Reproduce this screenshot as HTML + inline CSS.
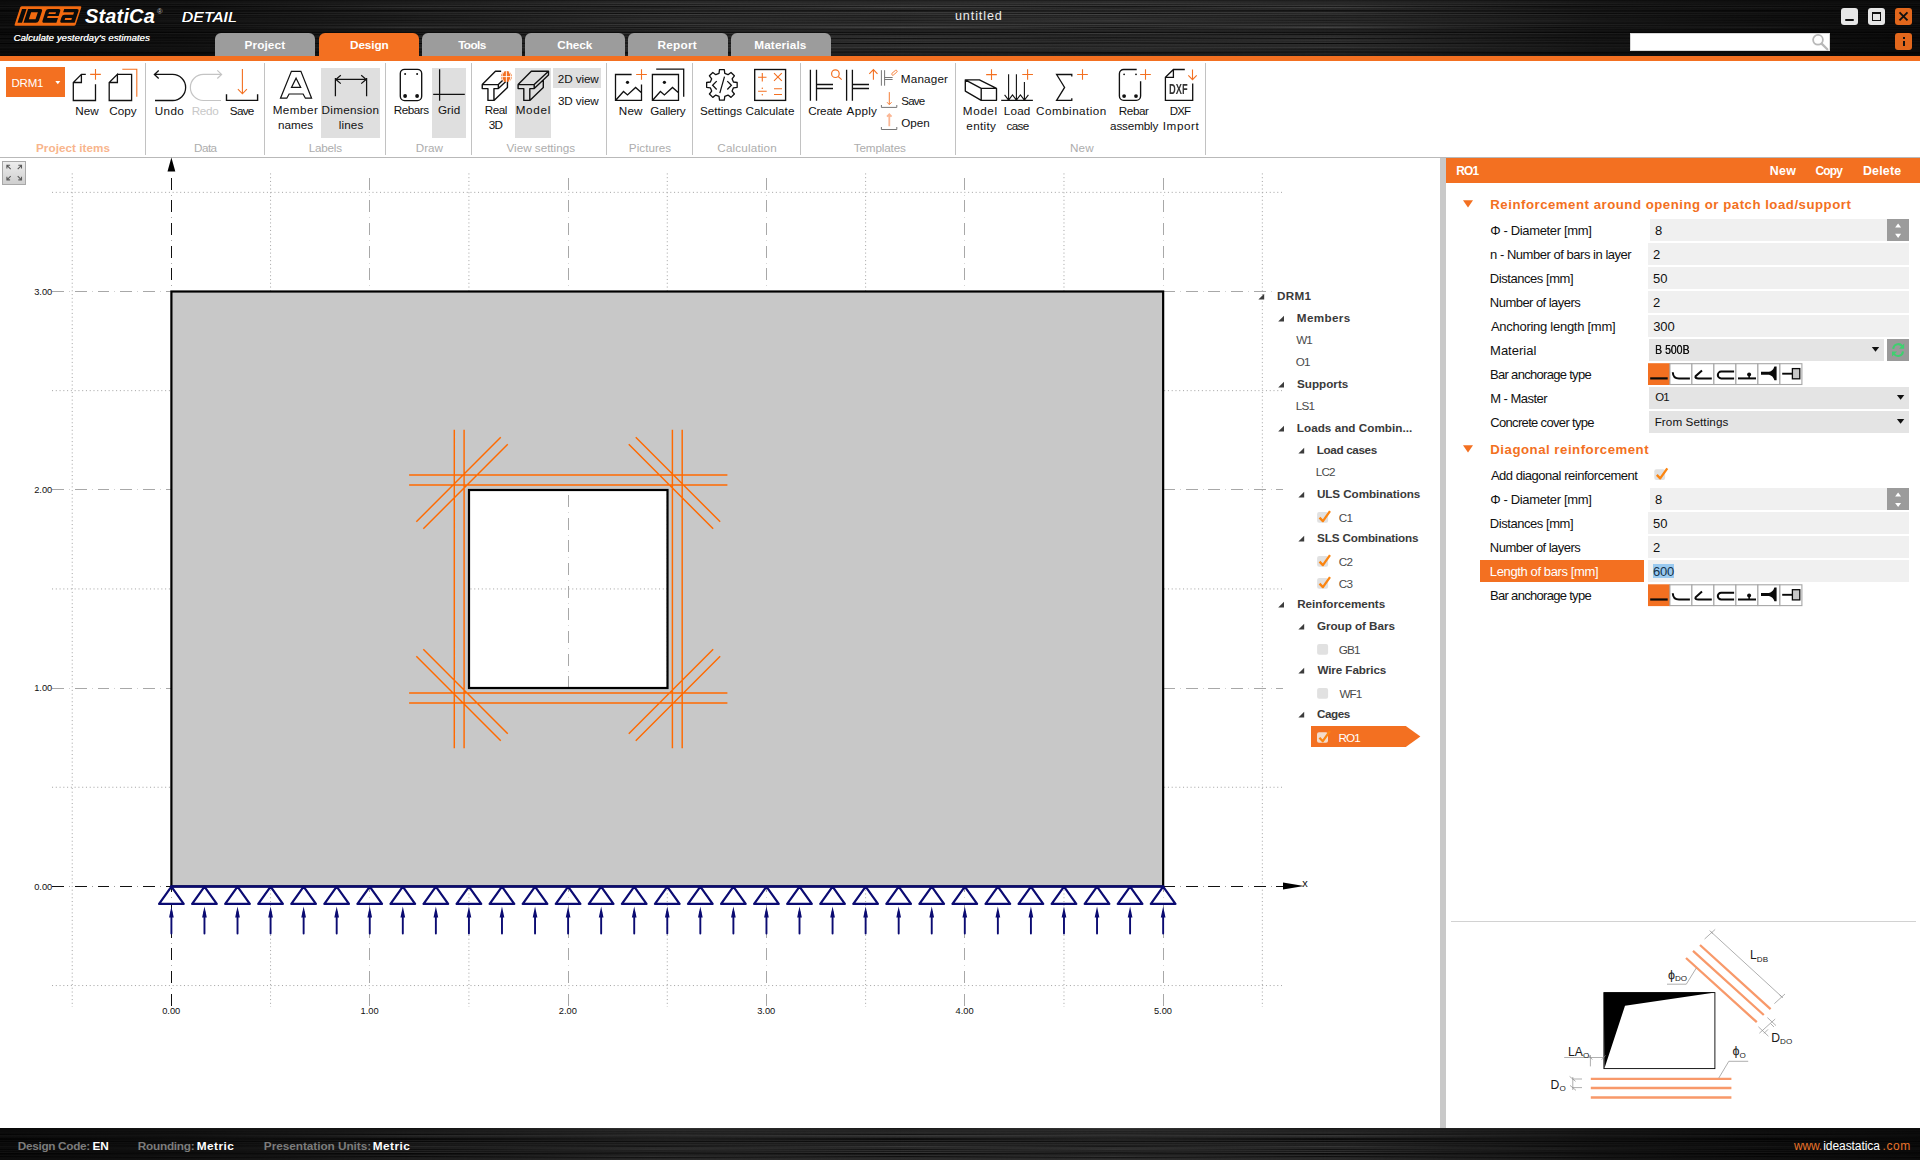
<!DOCTYPE html>
<html lang="en"><head><meta charset="utf-8"><title>IDEA StatiCa Detail - untitled</title><style>
html,body{margin:0;padding:0;}
body{width:1920px;height:1160px;overflow:hidden;background:#fff;position:relative;font-family:"Liberation Sans",sans-serif;}
.b{position:absolute;box-sizing:border-box;}
.t{position:absolute;white-space:pre;font-family:"Liberation Sans",sans-serif;}
svg{overflow:visible;}
</style></head>
<body>
<div class="b" style="left:0;top:0px;width:1920px;height:57px;background:linear-gradient(180deg,rgb(32,32,32) 0px,rgb(32,32,32) 1px,rgb(38,38,38) 1px,rgb(38,38,38) 2px,rgb(42,42,42) 2px,rgb(42,42,42) 3px,rgb(41,41,41) 3px,rgb(41,41,41) 4px,rgb(43,43,43) 4px,rgb(43,43,43) 5px,rgb(58,58,58) 5px,rgb(58,58,58) 6px,rgb(28,28,28) 6px,rgb(28,28,28) 7px,rgb(68,68,68) 7px,rgb(68,68,68) 8px,rgb(42,42,42) 8px,rgb(42,42,42) 9px,rgb(40,40,40) 9px,rgb(40,40,40) 10px,rgb(17,17,17) 10px,rgb(17,17,17) 11px,rgb(27,27,27) 11px,rgb(27,27,27) 12px,rgb(58,58,58) 12px,rgb(58,58,58) 13px,rgb(44,44,44) 13px,rgb(44,44,44) 14px,rgb(51,51,51) 14px,rgb(51,51,51) 15px,rgb(31,31,31) 15px,rgb(31,31,31) 16px,rgb(44,44,44) 16px,rgb(44,44,44) 17px,rgb(31,31,31) 17px,rgb(31,31,31) 18px,rgb(44,44,44) 18px,rgb(44,44,44) 19px,rgb(43,43,43) 19px,rgb(43,43,43) 20px,rgb(29,29,29) 20px,rgb(29,29,29) 21px,rgb(45,45,45) 21px,rgb(45,45,45) 22px,rgb(34,34,34) 22px,rgb(34,34,34) 23px,rgb(46,46,46) 23px,rgb(46,46,46) 24px,rgb(52,52,52) 24px,rgb(52,52,52) 25px,rgb(33,33,33) 25px,rgb(33,33,33) 26px,rgb(54,54,54) 26px,rgb(54,54,54) 27px,rgb(71,71,71) 27px,rgb(71,71,71) 28px,rgb(40,40,40) 28px,rgb(40,40,40) 29px,rgb(28,28,28) 29px,rgb(28,28,28) 30px,rgb(35,35,35) 30px,rgb(35,35,35) 31px,rgb(34,34,34) 31px,rgb(34,34,34) 32px,rgb(18,18,18) 32px,rgb(18,18,18) 33px,rgb(37,37,37) 33px,rgb(37,37,37) 34px,rgb(17,17,17) 34px,rgb(17,17,17) 35px,rgb(45,45,45) 35px,rgb(45,45,45) 36px,rgb(47,47,47) 36px,rgb(47,47,47) 37px,rgb(52,52,52) 37px,rgb(52,52,52) 38px,rgb(16,16,16) 38px,rgb(16,16,16) 39px,rgb(44,44,44) 39px,rgb(44,44,44) 40px,rgb(51,51,51) 40px,rgb(51,51,51) 41px,rgb(39,39,39) 41px,rgb(39,39,39) 42px,rgb(51,51,51) 42px,rgb(51,51,51) 43px,rgb(10,10,10) 43px,rgb(10,10,10) 44px,rgb(46,46,46) 44px,rgb(46,46,46) 45px,rgb(42,42,42) 45px,rgb(42,42,42) 46px,rgb(43,43,43) 46px,rgb(43,43,43) 47px,rgb(58,58,58) 47px,rgb(58,58,58) 48px,rgb(36,36,36) 48px,rgb(36,36,36) 49px,rgb(28,28,28) 49px,rgb(28,28,28) 50px,rgb(39,39,39) 50px,rgb(39,39,39) 51px,rgb(25,25,25) 51px,rgb(25,25,25) 52px,rgb(26,26,26) 52px,rgb(26,26,26) 53px,rgb(39,39,39) 53px,rgb(39,39,39) 54px,rgb(34,34,34) 54px,rgb(34,34,34) 55px,rgb(29,29,29) 55px,rgb(29,29,29) 56px,rgb(12,12,12) 56px,rgb(12,12,12) 57px);"></div>
<div class="b" style="left:0;top:0px;width:1920px;height:57px;background:linear-gradient(180deg,rgb(30,30,30) 0px,rgb(30,30,30) 1px,rgb(46,46,46) 1px,rgb(46,46,46) 2px,rgb(46,46,46) 2px,rgb(46,46,46) 3px,rgb(66,66,66) 3px,rgb(66,66,66) 4px,rgb(29,29,29) 4px,rgb(29,29,29) 5px,rgb(58,58,58) 5px,rgb(58,58,58) 6px,rgb(18,18,18) 6px,rgb(18,18,18) 7px,rgb(32,32,32) 7px,rgb(32,32,32) 8px,rgb(38,38,38) 8px,rgb(38,38,38) 9px,rgb(54,54,54) 9px,rgb(54,54,54) 10px,rgb(38,38,38) 10px,rgb(38,38,38) 11px,rgb(36,36,36) 11px,rgb(36,36,36) 12px,rgb(53,53,53) 12px,rgb(53,53,53) 13px,rgb(8,8,8) 13px,rgb(8,8,8) 14px,rgb(73,73,73) 14px,rgb(73,73,73) 15px,rgb(38,38,38) 15px,rgb(38,38,38) 16px,rgb(47,47,47) 16px,rgb(47,47,47) 17px,rgb(36,36,36) 17px,rgb(36,36,36) 18px,rgb(51,51,51) 18px,rgb(51,51,51) 19px,rgb(45,45,45) 19px,rgb(45,45,45) 20px,rgb(61,61,61) 20px,rgb(61,61,61) 21px,rgb(51,51,51) 21px,rgb(51,51,51) 22px,rgb(43,43,43) 22px,rgb(43,43,43) 23px,rgb(24,24,24) 23px,rgb(24,24,24) 24px,rgb(67,67,67) 24px,rgb(67,67,67) 25px,rgb(37,37,37) 25px,rgb(37,37,37) 26px,rgb(52,52,52) 26px,rgb(52,52,52) 27px,rgb(9,9,9) 27px,rgb(9,9,9) 28px,rgb(51,51,51) 28px,rgb(51,51,51) 29px,rgb(32,32,32) 29px,rgb(32,32,32) 30px,rgb(44,44,44) 30px,rgb(44,44,44) 31px,rgb(36,36,36) 31px,rgb(36,36,36) 32px,rgb(13,13,13) 32px,rgb(13,13,13) 33px,rgb(68,68,68) 33px,rgb(68,68,68) 34px,rgb(37,37,37) 34px,rgb(37,37,37) 35px,rgb(32,32,32) 35px,rgb(32,32,32) 36px,rgb(42,42,42) 36px,rgb(42,42,42) 37px,rgb(16,16,16) 37px,rgb(16,16,16) 38px,rgb(39,39,39) 38px,rgb(39,39,39) 39px,rgb(44,44,44) 39px,rgb(44,44,44) 40px,rgb(26,26,26) 40px,rgb(26,26,26) 41px,rgb(52,52,52) 41px,rgb(52,52,52) 42px,rgb(24,24,24) 42px,rgb(24,24,24) 43px,rgb(37,37,37) 43px,rgb(37,37,37) 44px,rgb(50,50,50) 44px,rgb(50,50,50) 45px,rgb(45,45,45) 45px,rgb(45,45,45) 46px,rgb(30,30,30) 46px,rgb(30,30,30) 47px,rgb(46,46,46) 47px,rgb(46,46,46) 48px,rgb(45,45,45) 48px,rgb(45,45,45) 49px,rgb(49,49,49) 49px,rgb(49,49,49) 50px,rgb(41,41,41) 50px,rgb(41,41,41) 51px,rgb(41,41,41) 51px,rgb(41,41,41) 52px,rgb(9,9,9) 52px,rgb(9,9,9) 53px,rgb(13,13,13) 53px,rgb(13,13,13) 54px,rgb(31,31,31) 54px,rgb(31,31,31) 55px,rgb(41,41,41) 55px,rgb(41,41,41) 56px,rgb(27,27,27) 56px,rgb(27,27,27) 57px);-webkit-mask-image:linear-gradient(90deg,transparent 0%,#000 9%,transparent 21%,#000 34%,transparent 47%,#000 58%,transparent 69%,#000 81%,transparent 92%,#000 100%);mask-image:linear-gradient(90deg,transparent 0%,#000 9%,transparent 21%,#000 34%,transparent 47%,#000 58%,transparent 69%,#000 81%,transparent 92%,#000 100%);opacity:.8;"></div>
<div class="b" style="left:0;top:0px;width:1920px;height:57px;background:linear-gradient(90deg,rgba(0,0,0,.7) 0%,rgba(0,0,0,.6) 10%,rgba(0,0,0,.3) 22%,rgba(0,0,0,.08) 36%,rgba(0,0,0,0) 50%,rgba(0,0,0,.06) 70%,rgba(0,0,0,.5) 83%,rgba(0,0,0,.74) 100%);"></div>
<div class="b" style="left:0px;top:56px;width:1920px;height:4.6px;background:#f37021;"></div>
<svg class="b" style="left:0px;top:0px;" width="240" height="56" viewBox="0 0 240 56"><g transform="translate(14.2,25.8) skewX(-18.1)">
<rect x="0" y="-19.6" width="61.1" height="19.6" rx="1.4" fill="#f26a10"/>
<g fill="#0b0b0b">
<rect x="2.3" y="-16.9" width="4.5" height="13.9"/>
<path fill-rule="evenodd" d="M8.3,-16.9H20.6Q23,-16.9 23,-14.5V-5.4Q23,-3 20.6,-3H8.3Z M12.5,-13.6V-6.5H19.2V-13.6Z"/>
<path fill-rule="evenodd" d="M29,-16.9H38.8Q41.2,-16.9 41.2,-14.5V-9.8H30.3V-7.8H41.2V-5.9H41.2V-3H29Q26.6,-3 26.6,-5.4V-14.5Q26.6,-16.9 29,-16.9Z M30.4,-13.6V-11.7H37.4V-13.6Z"/>
<path fill-rule="evenodd" d="M44.5,-16.9H57.1Q59.5,-16.9 59.5,-14.5V-3H46.9Q44.5,-3 44.5,-5.4V-8.6Q44.5,-11 46.9,-11H55.4V-13.6H44.5Z M48.5,-7.8V-5.9H55.2V-7.8Z"/>
</g></g></svg>
<span class="t" style="left:85.10px;top:4.17px;font-size:20.00px;line-height:24px;color:#fff;font-weight:700;font-style:italic;letter-spacing:0.133px;">StatiCa</span>
<span class="t" style="left:156.89px;top:5.60px;font-size:7.50px;line-height:12px;color:#bbb;">®</span>
<span class="t" style="left:181.73px;top:6.53px;font-size:15.50px;line-height:20px;color:#fff;font-style:italic;letter-spacing:0.357px;text-shadow:0.3px 0 0 #fff;">DETAIL</span>
<span class="t" style="left:13.48px;top:31.41px;font-size:9.50px;line-height:14px;color:#f4f4f4;font-style:italic;letter-spacing:0.098px;text-shadow:0.3px 0 0 #f4f4f4;">Calculate yesterday&#x27;s estimates</span>
<div class="b" style="left:215px;top:33px;width:99.6px;height:23.2px;background:#9c9c9c;border-radius:6px 6px 0 0;"></div>
<span class="t" style="left:244.53px;top:36.61px;font-size:11.80px;line-height:16px;color:#fff;font-weight:700;letter-spacing:0.097px;">Project</span>
<div class="b" style="left:319.2px;top:33px;width:99.6px;height:23.2px;background:#f37021;border-radius:6px 6px 0 0;"></div>
<span class="t" style="left:350.03px;top:36.61px;font-size:11.80px;line-height:16px;color:#fff;font-weight:700;letter-spacing:-0.136px;">Design</span>
<div class="b" style="left:422.3px;top:33px;width:99.6px;height:23.2px;background:#9c9c9c;border-radius:6px 6px 0 0;"></div>
<span class="t" style="left:458.18px;top:36.61px;font-size:11.80px;line-height:16px;color:#fff;font-weight:700;letter-spacing:-0.633px;">Tools</span>
<div class="b" style="left:525.3px;top:33px;width:99.6px;height:23.2px;background:#9c9c9c;border-radius:6px 6px 0 0;"></div>
<span class="t" style="left:557.23px;top:36.61px;font-size:11.80px;line-height:16px;color:#fff;font-weight:700;letter-spacing:-0.097px;">Check</span>
<div class="b" style="left:628.4px;top:33px;width:99.6px;height:23.2px;background:#9c9c9c;border-radius:6px 6px 0 0;"></div>
<span class="t" style="left:657.53px;top:36.61px;font-size:11.80px;line-height:16px;color:#fff;font-weight:700;letter-spacing:0.246px;">Report</span>
<div class="b" style="left:731.3px;top:33px;width:99.6px;height:23.2px;background:#9c9c9c;border-radius:6px 6px 0 0;"></div>
<span class="t" style="left:754.23px;top:36.61px;font-size:11.80px;line-height:16px;color:#fff;font-weight:700;letter-spacing:0.128px;">Materials</span>
<span class="t" style="left:954.94px;top:7.83px;font-size:12.60px;line-height:17px;color:#ececec;letter-spacing:0.897px;">untitled</span>
<div class="b" style="left:1841.1px;top:8.2px;width:16.8px;height:16.8px;background:#e6e6e6;border-radius:3px;"></div>
<div class="b" style="left:1845.2px;top:19.1px;width:8.7px;height:1.9px;background:#111;border-radius:1px;"></div>
<div class="b" style="left:1868.1px;top:8.2px;width:16.8px;height:16.8px;background:#e6e6e6;border-radius:3px;"></div>
<div class="b" style="left:1871.9px;top:12px;width:9.2px;height:9px;border:1.3px solid #111;border-top-width:2.3px;"></div>
<div class="b" style="left:1895px;top:8.2px;width:17px;height:16.8px;background:#e2671c;border-radius:3px;"></div>
<svg class="b" style="left:1895px;top:8.2px;" width="17" height="16.8" viewBox="0 0 17 16.8"><path d="M4.5,4.4L12.5,12.4M12.5,4.4L4.5,12.4" stroke="#111" stroke-width="1.9" fill="none"/></svg>
<div class="b" style="left:1630px;top:33px;width:200px;height:17.9px;background:#fff;box-shadow:inset 0 0 0 1px #d8d8d8;"></div>
<svg class="b" style="left:1808px;top:33px;" width="22" height="18" viewBox="0 0 22 18"><circle cx="10" cy="6.8" r="4.9" fill="none" stroke="#b8b8b8" stroke-width="1.8"/><path d="M13.6,10.6L19.3,16.2" stroke="#b8b8b8" stroke-width="2.3" stroke-linecap="round"/></svg>
<div class="b" style="left:1895px;top:33.1px;width:17px;height:16.9px;background:#e2671c;border-radius:3px;"></div>
<div class="b" style="left:1902.8px;top:37.2px;width:2.2px;height:1.9px;background:#111;"></div>
<div class="b" style="left:1902.8px;top:40.6px;width:2.2px;height:5.4px;background:#111;"></div>
<div class="b" style="left:0;top:1128px;width:1920px;height:32px;background:linear-gradient(180deg,rgb(24,24,24) 0px,rgb(24,24,24) 1px,rgb(33,33,33) 1px,rgb(33,33,33) 2px,rgb(36,36,36) 2px,rgb(36,36,36) 3px,rgb(37,37,37) 3px,rgb(37,37,37) 4px,rgb(42,42,42) 4px,rgb(42,42,42) 5px,rgb(37,37,37) 5px,rgb(37,37,37) 6px,rgb(17,17,17) 6px,rgb(17,17,17) 7px,rgb(58,58,58) 7px,rgb(58,58,58) 8px,rgb(47,47,47) 8px,rgb(47,47,47) 9px,rgb(37,37,37) 9px,rgb(37,37,37) 10px,rgb(14,14,14) 10px,rgb(14,14,14) 11px,rgb(10,10,10) 11px,rgb(10,10,10) 12px,rgb(37,37,37) 12px,rgb(37,37,37) 13px,rgb(13,13,13) 13px,rgb(13,13,13) 14px,rgb(46,46,46) 14px,rgb(46,46,46) 15px,rgb(31,31,31) 15px,rgb(31,31,31) 16px,rgb(35,35,35) 16px,rgb(35,35,35) 17px,rgb(32,32,32) 17px,rgb(32,32,32) 18px,rgb(58,58,58) 18px,rgb(58,58,58) 19px,rgb(40,40,40) 19px,rgb(40,40,40) 20px,rgb(41,41,41) 20px,rgb(41,41,41) 21px,rgb(17,17,17) 21px,rgb(17,17,17) 22px,rgb(48,48,48) 22px,rgb(48,48,48) 23px,rgb(24,24,24) 23px,rgb(24,24,24) 24px,rgb(55,55,55) 24px,rgb(55,55,55) 25px,rgb(10,10,10) 25px,rgb(10,10,10) 26px,rgb(24,24,24) 26px,rgb(24,24,24) 27px,rgb(45,45,45) 27px,rgb(45,45,45) 28px,rgb(15,15,15) 28px,rgb(15,15,15) 29px,rgb(40,40,40) 29px,rgb(40,40,40) 30px,rgb(44,44,44) 30px,rgb(44,44,44) 31px,rgb(41,41,41) 31px,rgb(41,41,41) 32px);"></div>
<div class="b" style="left:0;top:1128px;width:1920px;height:32px;background:linear-gradient(180deg,rgb(68,68,68) 0px,rgb(68,68,68) 1px,rgb(44,44,44) 1px,rgb(44,44,44) 2px,rgb(50,50,50) 2px,rgb(50,50,50) 3px,rgb(34,34,34) 3px,rgb(34,34,34) 4px,rgb(42,42,42) 4px,rgb(42,42,42) 5px,rgb(34,34,34) 5px,rgb(34,34,34) 6px,rgb(53,53,53) 6px,rgb(53,53,53) 7px,rgb(47,47,47) 7px,rgb(47,47,47) 8px,rgb(38,38,38) 8px,rgb(38,38,38) 9px,rgb(35,35,35) 9px,rgb(35,35,35) 10px,rgb(38,38,38) 10px,rgb(38,38,38) 11px,rgb(44,44,44) 11px,rgb(44,44,44) 12px,rgb(35,35,35) 12px,rgb(35,35,35) 13px,rgb(19,19,19) 13px,rgb(19,19,19) 14px,rgb(39,39,39) 14px,rgb(39,39,39) 15px,rgb(29,29,29) 15px,rgb(29,29,29) 16px,rgb(46,46,46) 16px,rgb(46,46,46) 17px,rgb(30,30,30) 17px,rgb(30,30,30) 18px,rgb(13,13,13) 18px,rgb(13,13,13) 19px,rgb(49,49,49) 19px,rgb(49,49,49) 20px,rgb(51,51,51) 20px,rgb(51,51,51) 21px,rgb(61,61,61) 21px,rgb(61,61,61) 22px,rgb(32,32,32) 22px,rgb(32,32,32) 23px,rgb(44,44,44) 23px,rgb(44,44,44) 24px,rgb(16,16,16) 24px,rgb(16,16,16) 25px,rgb(32,32,32) 25px,rgb(32,32,32) 26px,rgb(39,39,39) 26px,rgb(39,39,39) 27px,rgb(37,37,37) 27px,rgb(37,37,37) 28px,rgb(60,60,60) 28px,rgb(60,60,60) 29px,rgb(15,15,15) 29px,rgb(15,15,15) 30px,rgb(39,39,39) 30px,rgb(39,39,39) 31px,rgb(51,51,51) 31px,rgb(51,51,51) 32px);-webkit-mask-image:linear-gradient(90deg,transparent 0%,#000 9%,transparent 21%,#000 34%,transparent 47%,#000 58%,transparent 69%,#000 81%,transparent 92%,#000 100%);mask-image:linear-gradient(90deg,transparent 0%,#000 9%,transparent 21%,#000 34%,transparent 47%,#000 58%,transparent 69%,#000 81%,transparent 92%,#000 100%);opacity:.8;"></div>
<div class="b" style="left:0;top:1128px;width:1920px;height:32px;background:linear-gradient(90deg,rgba(0,0,0,.7) 0%,rgba(0,0,0,.6) 10%,rgba(0,0,0,.3) 22%,rgba(0,0,0,.08) 36%,rgba(0,0,0,0) 50%,rgba(0,0,0,.06) 70%,rgba(0,0,0,.5) 83%,rgba(0,0,0,.74) 100%);"></div>
<span class="t" style="left:17.83px;top:1137.91px;font-size:11.80px;line-height:16px;color:#7c7c7c;font-weight:700;letter-spacing:-0.333px;">Design Code:</span>
<span class="t" style="left:92.43px;top:1137.91px;font-size:11.80px;line-height:16px;color:#fff;font-weight:700;letter-spacing:-0.009px;">EN</span>
<span class="t" style="left:137.83px;top:1137.91px;font-size:11.80px;line-height:16px;color:#7c7c7c;font-weight:700;letter-spacing:-0.264px;">Rounding:</span>
<span class="t" style="left:196.73px;top:1137.91px;font-size:11.80px;line-height:16px;color:#fff;font-weight:700;letter-spacing:0.462px;">Metric</span>
<span class="t" style="left:263.83px;top:1137.91px;font-size:11.80px;line-height:16px;color:#7c7c7c;font-weight:700;letter-spacing:-0.045px;">Presentation Units:</span>
<span class="t" style="left:372.73px;top:1137.91px;font-size:11.80px;line-height:16px;color:#fff;font-weight:700;letter-spacing:0.462px;">Metric</span>
<span class="t" style="left:1794.06px;top:1137.84px;font-size:12.00px;line-height:16px;color:#e8732a;letter-spacing:-0.220px;">www.</span>
<span class="t" style="left:1823.22px;top:1137.84px;font-size:12.00px;line-height:16px;color:#fff;letter-spacing:-0.064px;">ideastatica</span>
<span class="t" style="left:1882.52px;top:1137.84px;font-size:12.00px;line-height:16px;color:#e8732a;letter-spacing:0.607px;">.com</span>
<div class="b" style="left:0px;top:156.5px;width:1920px;height:1.3px;background:#b9b9b9;"></div>
<div class="b" style="left:321px;top:68px;width:59px;height:69.6px;background:#dfdfdf;"></div>
<div class="b" style="left:432.2px;top:68px;width:33.6px;height:69.6px;background:#dfdfdf;"></div>
<div class="b" style="left:515.2px;top:68px;width:35.6px;height:69.6px;background:#dfdfdf;"></div>
<div class="b" style="left:553px;top:68px;width:48px;height:19.8px;background:#dfdfdf;"></div>
<div class="b" style="left:145.0px;top:63px;width:1.2px;height:91.5px;background:#c2c2c2;"></div>
<div class="b" style="left:263.9px;top:63px;width:1.2px;height:91.5px;background:#c2c2c2;"></div>
<div class="b" style="left:385.0px;top:63px;width:1.2px;height:91.5px;background:#c2c2c2;"></div>
<div class="b" style="left:470.9px;top:63px;width:1.2px;height:91.5px;background:#c2c2c2;"></div>
<div class="b" style="left:605.8px;top:63px;width:1.2px;height:91.5px;background:#c2c2c2;"></div>
<div class="b" style="left:691.9px;top:63px;width:1.2px;height:91.5px;background:#c2c2c2;"></div>
<div class="b" style="left:800.1px;top:63px;width:1.2px;height:91.5px;background:#c2c2c2;"></div>
<div class="b" style="left:955.0px;top:63px;width:1.2px;height:91.5px;background:#c2c2c2;"></div>
<div class="b" style="left:1204.9px;top:63px;width:1.2px;height:91.5px;background:#c2c2c2;"></div>
<div class="b" style="left:6px;top:67px;width:59px;height:30px;background:#f37021;"></div>
<span class="t" style="left:11.48px;top:74.72px;font-size:11.50px;line-height:16px;color:#fff;letter-spacing:-0.203px;">DRM1</span>
<svg class="b" style="left:0;top:60px" width="1920" height="100" viewBox="0 60 1920 100"><path d="M55.3,81.1H60.3L57.8,84.3Z" fill="#fff"/><path d="M85.8,74.4H81.4L73.3,82.5V100.5H95.5V84.3M81.4,74.4V82.5H73.3" fill="none" stroke="#111" stroke-width="1.3" /><path d="M90.15,74.4H100.85M95.5,69.05000000000001V79.75" fill="none" stroke="#f37021" stroke-width="1.1" /><path d="M117.4,74.4H131.6V100.5H109.2V82.5L117.4,74.4V82.5H109.2" fill="none" stroke="#111" stroke-width="1.3" /><path d="M122.3,69.2H136.8V96.8" fill="none" stroke="#f37021" stroke-width="1.1" /><path d="M158.7,70.4L154.4,74.4L158.7,78.5M154.6,74.4H172.6A13.05,13.05 0 0 1 172.6,100.5H155" fill="none" stroke="#111" stroke-width="1.3" /><path d="M217.3,70.4L221.6,74.4L217.3,78.5M221.4,74.4H203.4A13.05,13.05 0 0 0 203.4,100.5H221" fill="none" stroke="#c4c4c4" stroke-width="1.2" /><path d="M242.4,69V93.6M237.9,89.2L242.4,93.8L246.9,89.2" fill="none" stroke="#f37021" stroke-width="1.1" /><path d="M226.5,94.2V100.4H257.6V94.2" fill="none" stroke="#111" stroke-width="1.4" /><path d="M291.4,71.3H300.9L311.6,98.2H305.4L303.1,94H289.1L286.8,98.2H280.5ZM296.1,78.2L300.7,87.4H291.5Z" fill="none" stroke="#111" stroke-width="1.2" stroke-linejoin="miter"/><path d="M335.4,78.1V96.3M366.6,78.1V96.3M335.8,79.4H366.2M340.8,75.2L335.9,79.4L340.8,83.6M361.2,75.2L366.1,79.4L361.2,83.6" fill="none" stroke="#111" stroke-width="1.25" /><rect x="400.3" y="69.3" width="21.4" height="31.3" rx="4.3" fill="none" stroke="#111" stroke-width="1.35"/><circle cx="405.1" cy="74.1" r="1" fill="#111"/><circle cx="417.1" cy="74.1" r="1" fill="#111"/><circle cx="405.1" cy="96" r="1.9" fill="#111"/><circle cx="417.1" cy="96" r="1.9" fill="#111"/><path d="M439.6,69.2V100.7M433.2,94.4H464.8" fill="none" stroke="#111" stroke-width="1.25" /><path d="M482.25,84.6H498.35V88.6H493.94999999999993V100.4H487.94999999999993V88.6H482.25ZM482.25,84.6L495.44999999999993,71.3H501.15M498.35,84.6L504.65,78.6M498.35,88.6L510.65,77M507.44999999999993,80.2V87.6L493.94999999999993,100.4" fill="none" stroke="#111" stroke-width="1.4" stroke-linejoin="round"/><circle cx="506.4" cy="76.6" r="5.5" fill="#f37021"/><path d="M500.9,76.6H511.9M506.4,71.1V82.1M503.6,72A8,8 0 0 0 503.6,81.2M509.2,72A8,8 0 0 1 509.2,81.2" fill="none" stroke="#fff" stroke-width="0.9" /><path d="M518.1,84.6H534.2V88.6H529.8V100.4H523.8V88.6H518.1ZM518.1,84.6L531.3,71.3H548.5L534.2,84.6M548.5,71.3V75.1L534.2,88.6M543.3,80.2V87.6L529.8,100.4" fill="none" stroke="#111" stroke-width="1.4" stroke-linejoin="round"/><path d="M631.6,74.5H615.5V100.4H641.5V84.6M615.7,100.2L623.5,91.5L627.5,95L635.6,87.5L641.5,92.8" fill="none" stroke="#111" stroke-width="1.3" /><circle cx="627.5" cy="82.3" r="1.6" fill="#111"/><path d="M636.15,74.5H646.85M641.5,69.15V79.85" fill="none" stroke="#f37021" stroke-width="1.1" /><path d="M652.4,74.5H678.5V100.4H652.4ZM652.6,100.2L660.4,91.5L664.4,95L672.5,87.5L678.5,92.8M656.2,69.2H683.7V96.7" fill="none" stroke="#111" stroke-width="1.3" /><circle cx="664.4" cy="82.3" r="1.6" fill="#111"/><path d="M719.01,73.36L719.51,69.64L724.29,69.64L724.79,73.36L728.02,74.70L731.01,72.42L734.38,75.79L732.10,78.78L733.44,82.01L737.16,82.51L737.16,87.29L733.44,87.79L732.10,91.02L734.38,94.01L731.01,97.38L728.02,95.10L724.79,96.44L724.29,100.16L719.51,100.16L719.01,96.44L715.78,95.10L712.79,97.38L709.42,94.01L711.70,91.02L710.36,87.79L706.64,87.29L706.64,82.51L710.36,82.01L711.70,78.78L709.42,75.79L712.79,72.42L715.78,74.70Z" fill="none" stroke="#111" stroke-width="1.3" stroke-linejoin="round"/><path d="M716.7,81.1L712.6,85.3L716.7,89.5M727.3,81.1L731.4,85.3L727.3,89.5M724.5,76.6L719.8,93.2" fill="none" stroke="#111" stroke-width="1.25" /><rect x="754.7" y="69.5" width="30.9" height="30.9" fill="none" stroke="#111" stroke-width="1.35"/><path d="M758.1,77.3H766.5M762.3,73.1V81.5M774,73.1L781.8,80.9M781.8,73.1L774,80.9M758.1,91.3H766.7M774,88.7H782M774,94.5H782" fill="none" stroke="#f37021" stroke-width="1.1" /><circle cx="762.3" cy="88.3" r="0.75" fill="#f37021"/><circle cx="762.3" cy="94.8" r="0.75" fill="#f37021"/><path d="M810.4,69.7V100.7M816.5,69.7V100.7M816.5,84.5H833M816.5,88.5H833" fill="none" stroke="#111" stroke-width="1.3" /><circle cx="835.4" cy="73.7" r="3.8" fill="none" stroke="#f37021" stroke-width="1.2"/><path d="M838.2,76.5L841.7,79.7" fill="none" stroke="#f37021" stroke-width="1.1" /><path d="M846.6,69.7V100.7M852.4,69.7V100.7M852.4,84.5H869M852.4,88.5H869" fill="none" stroke="#111" stroke-width="1.3" /><path d="M873.4,69.4V79.8M869.3,73.9L873.4,69.6L877.5,73.9" fill="none" stroke="#f37021" stroke-width="1.1" /><path d="M881.4,70.2V85.7M884.6,70.2V85.7M884.6,77.5H892.6M884.6,79.5H892.6" fill="none" stroke="#666" stroke-width="0.9" /><rect x="-3.2" y="-1.1" width="6.4" height="2.2" rx="1" transform="translate(894.4,72.7) rotate(-40)" fill="none" stroke="#f37021" stroke-width="0.8"/><path d="M889.3,92.1V104.3M887,102.2L889.3,104.6L891.6,102.2" fill="none" stroke="#f37021" stroke-width="0.9" /><path d="M881.4,105V107.4H896.8V105" fill="none" stroke="#666" stroke-width="0.9" /><path d="M889.3,114.6V126.3M887,116.6L889.3,114.3L891.6,116.6" fill="none" stroke="#fbb795" stroke-width="1.8" /><path d="M881.4,127V129.5H896.8V127" fill="none" stroke="#666" stroke-width="0.9" /><path d="M981.2,88.4H996.5V100.3H981.2ZM981.2,88.4L965.3,79.9H979.4L996.5,88.4M965.3,79.9V91.1L981.2,100.3" fill="none" stroke="#111" stroke-width="1.35" stroke-linejoin="round"/><path d="M986.15,74.6H996.85M991.5,69.25V79.94999999999999" fill="none" stroke="#f37021" stroke-width="1.1" /><path d="M1001.2,100.4H1032.9M1008.6,74.3V100.2M1016.4,74.3V100.2M1024.4,82.1V100.2M1004.6,94.9L1008.6,100.2L1012.5,94.9L1016.4,100.2L1020.4,94.9L1024.4,100.2L1028.4,94.9" fill="none" stroke="#111" stroke-width="1.1" /><path d="M1022.2499999999999,74.5H1032.9499999999998M1027.6,69.15V79.85" fill="none" stroke="#f37021" stroke-width="1.1" /><path d="M1071.8,76.6V74.5H1056.6L1064.6,87.4L1056.6,100.3H1071.8V98.2" fill="none" stroke="#111" stroke-width="1.3" /><path d="M1077.15,74.5H1087.85M1082.5,69.15V79.85" fill="none" stroke="#f37021" stroke-width="1.1" /><path d="M1136.7,69.5H1123.7A4.3,4.3 0 0 0 1119.4,73.8V96.1A4.3,4.3 0 0 0 1123.7,100.4H1136.3A4.3,4.3 0 0 0 1140.6,96.1V81.2" fill="none" stroke="#111" stroke-width="1.35" /><circle cx="1124.1" cy="74.3" r="0.9" fill="#111"/><circle cx="1136" cy="74.3" r="0.9" fill="#111"/><circle cx="1124.1" cy="96.1" r="1.9" fill="#111"/><circle cx="1136" cy="96.1" r="1.9" fill="#111"/><path d="M1140.15,74.5H1150.85M1145.5,69.15V79.85" fill="none" stroke="#f37021" stroke-width="1.1" /><path d="M1184.8,69.5H1173.4L1165.4,77.3V100.4H1192.7V83.5M1173.4,69.5V77.3H1165.4" fill="none" stroke="#111" stroke-width="1.3" /><path d="M1192.5,69.5V79.5M1188.3,75.4L1192.5,79.7L1196.7,75.4" fill="none" stroke="#f37021" stroke-width="1.1" /></svg>
<span class="t" style="left:1168.6px;top:81.6px;font-size:14.2px;line-height:14px;font-weight:700;color:#333;transform:scaleX(0.655);transform-origin:0 0;">DXF</span>
<span class="t" style="left:75.26px;top:102.55px;font-size:11.70px;line-height:16px;color:#111;letter-spacing:0.039px;">New</span>
<span class="t" style="left:109.22px;top:102.55px;font-size:11.70px;line-height:16px;color:#111;letter-spacing:0.022px;">Copy</span>
<span class="t" style="left:154.72px;top:102.55px;font-size:11.70px;line-height:16px;color:#111;letter-spacing:0.394px;">Undo</span>
<span class="t" style="left:229.87px;top:102.55px;font-size:11.70px;line-height:16px;color:#111;letter-spacing:-0.727px;">Save</span>
<span class="t" style="left:272.66px;top:101.75px;font-size:11.70px;line-height:16px;color:#111;letter-spacing:0.475px;">Member</span>
<span class="t" style="left:277.94px;top:116.65px;font-size:11.70px;line-height:16px;color:#111;letter-spacing:-0.008px;">names</span>
<span class="t" style="left:321.56px;top:101.75px;font-size:11.70px;line-height:16px;color:#111;letter-spacing:0.294px;">Dimension</span>
<span class="t" style="left:338.64px;top:116.65px;font-size:11.70px;line-height:16px;color:#111;letter-spacing:0.182px;">lines</span>
<span class="t" style="left:393.86px;top:101.75px;font-size:11.70px;line-height:16px;color:#111;letter-spacing:-0.497px;">Rebars</span>
<span class="t" style="left:437.92px;top:101.75px;font-size:11.70px;line-height:16px;color:#111;letter-spacing:0.091px;">Grid</span>
<span class="t" style="left:484.66px;top:101.75px;font-size:11.70px;line-height:16px;color:#111;letter-spacing:-0.435px;">Real</span>
<span class="t" style="left:488.79px;top:116.65px;font-size:11.70px;line-height:16px;color:#111;letter-spacing:-0.681px;">3D</span>
<span class="t" style="left:515.66px;top:101.75px;font-size:11.70px;line-height:16px;color:#111;letter-spacing:0.704px;">Model</span>
<span class="t" style="left:557.71px;top:70.55px;font-size:11.70px;line-height:16px;color:#111;letter-spacing:-0.078px;">2D view</span>
<span class="t" style="left:557.89px;top:92.75px;font-size:11.70px;line-height:16px;color:#111;letter-spacing:-0.107px;">3D view</span>
<span class="t" style="left:618.76px;top:102.55px;font-size:11.70px;line-height:16px;color:#111;letter-spacing:0.189px;">New</span>
<span class="t" style="left:650.31px;top:102.55px;font-size:11.70px;line-height:16px;color:#111;letter-spacing:-0.267px;">Gallery</span>
<span class="t" style="left:699.97px;top:102.55px;font-size:11.70px;line-height:16px;color:#111;letter-spacing:-0.023px;">Settings</span>
<span class="t" style="left:745.41px;top:102.55px;font-size:11.70px;line-height:16px;color:#111;letter-spacing:0.033px;">Calculate</span>
<span class="t" style="left:808.21px;top:102.55px;font-size:11.70px;line-height:16px;color:#111;letter-spacing:-0.209px;">Create</span>
<span class="t" style="left:846.60px;top:102.55px;font-size:11.70px;line-height:16px;color:#111;letter-spacing:0.263px;">Apply</span>
<span class="t" style="left:900.86px;top:70.55px;font-size:11.70px;line-height:16px;color:#111;letter-spacing:0.166px;">Manager</span>
<span class="t" style="left:901.28px;top:92.69px;font-size:11.57px;line-height:16px;color:#111;letter-spacing:-0.800px;">Save</span>
<span class="t" style="left:901.27px;top:114.75px;font-size:11.70px;line-height:16px;color:#111;letter-spacing:-0.026px;">Open</span>
<span class="t" style="left:962.86px;top:102.55px;font-size:11.70px;line-height:16px;color:#111;letter-spacing:0.579px;">Model</span>
<span class="t" style="left:966.33px;top:117.55px;font-size:11.70px;line-height:16px;color:#111;letter-spacing:0.341px;">entity</span>
<span class="t" style="left:1003.86px;top:102.55px;font-size:11.70px;line-height:16px;color:#111;letter-spacing:0.135px;">Load</span>
<span class="t" style="left:1006.43px;top:117.55px;font-size:11.70px;line-height:16px;color:#111;letter-spacing:-0.584px;">case</span>
<span class="t" style="left:1036.12px;top:102.55px;font-size:11.70px;line-height:16px;color:#111;letter-spacing:0.449px;">Combination</span>
<span class="t" style="left:1118.76px;top:102.55px;font-size:11.70px;line-height:16px;color:#111;letter-spacing:-0.393px;">Rebar</span>
<span class="t" style="left:1110.03px;top:117.55px;font-size:11.70px;line-height:16px;color:#111;letter-spacing:-0.138px;">assembly</span>
<span class="t" style="left:1169.67px;top:102.59px;font-size:11.56px;line-height:16px;color:#111;letter-spacing:-0.800px;">DXF</span>
<span class="t" style="left:1162.75px;top:117.55px;font-size:11.70px;line-height:16px;color:#111;letter-spacing:0.588px;">Import</span>
<span class="t" style="left:191.66px;top:102.55px;font-size:11.70px;line-height:16px;color:#c8c8c8;letter-spacing:-0.320px;">Redo</span>
<span class="t" style="left:36.04px;top:139.75px;font-size:11.70px;line-height:16px;color:#f8b58c;font-weight:700;letter-spacing:0.041px;">Project items</span>
<span class="t" style="left:194.06px;top:139.75px;font-size:11.70px;line-height:16px;color:#adadad;letter-spacing:-0.537px;">Data</span>
<span class="t" style="left:308.76px;top:139.75px;font-size:11.70px;line-height:16px;color:#adadad;letter-spacing:-0.222px;">Labels</span>
<span class="t" style="left:415.76px;top:139.75px;font-size:11.70px;line-height:16px;color:#adadad;letter-spacing:-0.028px;">Draw</span>
<span class="t" style="left:506.50px;top:139.75px;font-size:11.70px;line-height:16px;color:#adadad;letter-spacing:-0.011px;">View settings</span>
<span class="t" style="left:628.86px;top:139.75px;font-size:11.70px;line-height:16px;color:#adadad;letter-spacing:0.015px;">Pictures</span>
<span class="t" style="left:717.31px;top:139.75px;font-size:11.70px;line-height:16px;color:#adadad;letter-spacing:0.163px;">Calculation</span>
<span class="t" style="left:853.77px;top:139.75px;font-size:11.70px;line-height:16px;color:#adadad;letter-spacing:-0.151px;">Templates</span>
<span class="t" style="left:1069.96px;top:139.75px;font-size:11.70px;line-height:16px;color:#adadad;letter-spacing:0.189px;">New</span>
<svg class="b" style="left:0;top:157px" width="1440" height="971" viewBox="0 157 1440 971"><g id="grid"><path d="M72.23,173.4V1007" stroke="#a6a6a6" stroke-width="1" stroke-dasharray="1.05 2.72" fill="none"/><path d="M270.57,173.4V1007" stroke="#a6a6a6" stroke-width="1" stroke-dasharray="1.05 2.72" fill="none"/><path d="M468.92,173.4V1007" stroke="#a6a6a6" stroke-width="1" stroke-dasharray="1.05 2.72" fill="none"/><path d="M667.27,173.4V1007" stroke="#a6a6a6" stroke-width="1" stroke-dasharray="1.05 2.72" fill="none"/><path d="M865.62,173.4V1007" stroke="#a6a6a6" stroke-width="1" stroke-dasharray="1.05 2.72" fill="none"/><path d="M1063.97,173.4V1007" stroke="#a6a6a6" stroke-width="1" stroke-dasharray="1.05 2.72" fill="none"/><path d="M1262.33,173.4V1007" stroke="#a6a6a6" stroke-width="1" stroke-dasharray="1.05 2.72" fill="none"/><path d="M52,985.55H1282" stroke="#a6a6a6" stroke-width="1" stroke-dasharray="1.05 2.72" fill="none"/><path d="M52,787.25H1282" stroke="#a6a6a6" stroke-width="1" stroke-dasharray="1.05 2.72" fill="none"/><path d="M52,588.95H1282" stroke="#a6a6a6" stroke-width="1" stroke-dasharray="1.05 2.72" fill="none"/><path d="M52,390.65H1282" stroke="#a6a6a6" stroke-width="1" stroke-dasharray="1.05 2.72" fill="none"/><path d="M52,192.35H1282" stroke="#a6a6a6" stroke-width="1" stroke-dasharray="1.05 2.72" fill="none"/><path d="M369.75,177.7V1005.6" fill="none" stroke="#a8a8a8" stroke-width="1" stroke-dasharray="11.8 10.87" shape-rendering="crispEdges"/><path d="M369.75,177.7V1005.6" fill="none" stroke="#d6d6d6" stroke-width="1" stroke-dasharray="0 16.8 1 4.87" shape-rendering="crispEdges"/><path d="M568.10,177.7V1005.6" fill="none" stroke="#a8a8a8" stroke-width="1" stroke-dasharray="11.8 10.87" shape-rendering="crispEdges"/><path d="M568.10,177.7V1005.6" fill="none" stroke="#d6d6d6" stroke-width="1" stroke-dasharray="0 16.8 1 4.87" shape-rendering="crispEdges"/><path d="M766.45,177.7V1005.6" fill="none" stroke="#a8a8a8" stroke-width="1" stroke-dasharray="11.8 10.87" shape-rendering="crispEdges"/><path d="M766.45,177.7V1005.6" fill="none" stroke="#d6d6d6" stroke-width="1" stroke-dasharray="0 16.8 1 4.87" shape-rendering="crispEdges"/><path d="M964.80,177.7V1005.6" fill="none" stroke="#a8a8a8" stroke-width="1" stroke-dasharray="11.8 10.87" shape-rendering="crispEdges"/><path d="M964.80,177.7V1005.6" fill="none" stroke="#d6d6d6" stroke-width="1" stroke-dasharray="0 16.8 1 4.87" shape-rendering="crispEdges"/><path d="M1163.15,177.7V1005.6" fill="none" stroke="#a8a8a8" stroke-width="1" stroke-dasharray="11.8 10.87" shape-rendering="crispEdges"/><path d="M1163.15,177.7V1005.6" fill="none" stroke="#d6d6d6" stroke-width="1" stroke-dasharray="0 16.8 1 4.87" shape-rendering="crispEdges"/><path d="M52.3,688.10H1282.6" fill="none" stroke="#a8a8a8" stroke-width="1" stroke-dasharray="11.8 10.87" shape-rendering="crispEdges"/><path d="M52.3,688.10H1282.6" fill="none" stroke="#d0d0d0" stroke-width="1" stroke-dasharray="0 16.8 1 4.87" shape-rendering="crispEdges"/><path d="M52.3,489.80H1282.6" fill="none" stroke="#a8a8a8" stroke-width="1" stroke-dasharray="11.8 10.87" shape-rendering="crispEdges"/><path d="M52.3,489.80H1282.6" fill="none" stroke="#d0d0d0" stroke-width="1" stroke-dasharray="0 16.8 1 4.87" shape-rendering="crispEdges"/><path d="M52.3,291.50H1274" fill="none" stroke="#a8a8a8" stroke-width="1" stroke-dasharray="11.8 10.87" shape-rendering="crispEdges"/><path d="M52.3,291.50H1274" fill="none" stroke="#d0d0d0" stroke-width="1" stroke-dasharray="0 16.8 1 4.87" shape-rendering="crispEdges"/><path d="M171.40,177.7V1005.6" fill="none" stroke="#111" stroke-width="1.1" stroke-dasharray="11.8 10.87" shape-rendering="crispEdges"/><path d="M171.40,177.7V1005.6" fill="none" stroke="#aaa" stroke-width="1.1" stroke-dasharray="0 16.8 1 4.87" shape-rendering="crispEdges"/><path d="M52.3,886.40H1284" fill="none" stroke="#111" stroke-width="1.1" stroke-dasharray="11.8 10.87" shape-rendering="crispEdges"/><path d="M52.3,886.40H1284" fill="none" stroke="#999" stroke-width="1.1" stroke-dasharray="0 16.8 1 4.87" shape-rendering="crispEdges"/></g><path d="M171.40,157.4L167.50,171.4H175.30Z" fill="#000"/><path d="M1304,886.00L1283,882.40V889.60Z" fill="#000"/><rect x="171.40" y="291.50" width="991.75" height="594.90" fill="#c8c8c8" stroke="#000" stroke-width="2.2"/><clipPath id="opc"><rect x="469.0" y="490.0" width="198.5" height="198.0"/></clipPath><rect x="469.0" y="490.0" width="198.5" height="198.0" fill="#fff"/><g clip-path="url(#opc)"><use href="#grid"/></g><rect x="469.0" y="490.0" width="198.5" height="198.0" fill="none" stroke="#000" stroke-width="2.2"/><path d="M464.10,429.8V748.2M454.30,429.8V748.2M672.40,429.8V748.2M682.20,429.8V748.2M409.1,485.00H727.4M409.1,475.00H727.4M409.1,693.00H727.4M409.1,703.00H727.4M507.75,444.32L423.32,528.75M500.75,437.32L416.32,521.75M628.75,444.32L713.18,528.75M635.75,437.32L720.18,521.75M507.75,733.68L423.32,649.25M500.75,740.68L416.32,656.25M628.75,733.68L713.18,649.25M635.75,740.68L720.18,656.25" fill="none" stroke="#ff6a00" stroke-width="1.45"/><path d="M170.30,886.50H1164.25" stroke="#0b0b72" stroke-width="2.4" fill="none"/><path d="M171.40,886.70L159.10,903.9H183.70ZM204.46,886.70L192.16,903.9H216.76ZM237.52,886.70L225.22,903.9H249.82ZM270.58,886.70L258.28,903.9H282.88ZM303.63,886.70L291.33,903.9H315.93ZM336.69,886.70L324.39,903.9H348.99ZM369.75,886.70L357.45,903.9H382.05ZM402.81,886.70L390.51,903.9H415.11ZM435.87,886.70L423.57,903.9H448.17ZM468.93,886.70L456.63,903.9H481.23ZM501.98,886.70L489.68,903.9H514.28ZM535.04,886.70L522.74,903.9H547.34ZM568.10,886.70L555.80,903.9H580.40ZM601.16,886.70L588.86,903.9H613.46ZM634.22,886.70L621.92,903.9H646.52ZM667.28,886.70L654.98,903.9H679.58ZM700.33,886.70L688.03,903.9H712.63ZM733.39,886.70L721.09,903.9H745.69ZM766.45,886.70L754.15,903.9H778.75ZM799.51,886.70L787.21,903.9H811.81ZM832.57,886.70L820.27,903.9H844.87ZM865.63,886.70L853.33,903.9H877.93ZM898.68,886.70L886.38,903.9H910.98ZM931.74,886.70L919.44,903.9H944.04ZM964.80,886.70L952.50,903.9H977.10ZM997.86,886.70L985.56,903.9H1010.16ZM1030.92,886.70L1018.62,903.9H1043.22ZM1063.98,886.70L1051.68,903.9H1076.28ZM1097.03,886.70L1084.73,903.9H1109.33ZM1130.09,886.70L1117.79,903.9H1142.39ZM1163.15,886.70L1150.85,903.9H1175.45Z" fill="none" stroke="#0b0b72" stroke-width="2.2" stroke-linejoin="round"/><path d="M171.40,933.6V912M204.46,933.6V912M237.52,933.6V912M270.58,933.6V912M303.63,933.6V912M336.69,933.6V912M369.75,933.6V912M402.81,933.6V912M435.87,933.6V912M468.93,933.6V912M501.98,933.6V912M535.04,933.6V912M568.10,933.6V912M601.16,933.6V912M634.22,933.6V912M667.28,933.6V912M700.33,933.6V912M733.39,933.6V912M766.45,933.6V912M799.51,933.6V912M832.57,933.6V912M865.63,933.6V912M898.68,933.6V912M931.74,933.6V912M964.80,933.6V912M997.86,933.6V912M1030.92,933.6V912M1063.98,933.6V912M1097.03,933.6V912M1130.09,933.6V912M1163.15,933.6V912" fill="none" stroke="#0b0b72" stroke-width="1.9" stroke-linecap="round"/><path d="M171.40,906.4L169.05,917.4H173.75ZM204.46,906.4L202.11,917.4H206.81ZM237.52,906.4L235.17,917.4H239.87ZM270.58,906.4L268.23,917.4H272.93ZM303.63,906.4L301.28,917.4H305.98ZM336.69,906.4L334.34,917.4H339.04ZM369.75,906.4L367.40,917.4H372.10ZM402.81,906.4L400.46,917.4H405.16ZM435.87,906.4L433.52,917.4H438.22ZM468.93,906.4L466.58,917.4H471.28ZM501.98,906.4L499.63,917.4H504.33ZM535.04,906.4L532.69,917.4H537.39ZM568.10,906.4L565.75,917.4H570.45ZM601.16,906.4L598.81,917.4H603.51ZM634.22,906.4L631.87,917.4H636.57ZM667.28,906.4L664.93,917.4H669.63ZM700.33,906.4L697.98,917.4H702.68ZM733.39,906.4L731.04,917.4H735.74ZM766.45,906.4L764.10,917.4H768.80ZM799.51,906.4L797.16,917.4H801.86ZM832.57,906.4L830.22,917.4H834.92ZM865.63,906.4L863.28,917.4H867.98ZM898.68,906.4L896.33,917.4H901.03ZM931.74,906.4L929.39,917.4H934.09ZM964.80,906.4L962.45,917.4H967.15ZM997.86,906.4L995.51,917.4H1000.21ZM1030.92,906.4L1028.57,917.4H1033.27ZM1063.98,906.4L1061.63,917.4H1066.33ZM1097.03,906.4L1094.68,917.4H1099.38ZM1130.09,906.4L1127.74,917.4H1132.44ZM1163.15,906.4L1160.80,917.4H1165.50Z" fill="#0b0b72"/><text x="52.3" y="889.70" text-anchor="end" font-family="Liberation Sans, sans-serif" font-size="9.3" fill="#111">0.00</text><text x="52.3" y="691.40" text-anchor="end" font-family="Liberation Sans, sans-serif" font-size="9.3" fill="#111">1.00</text><text x="52.3" y="493.10" text-anchor="end" font-family="Liberation Sans, sans-serif" font-size="9.3" fill="#111">2.00</text><text x="52.3" y="294.80" text-anchor="end" font-family="Liberation Sans, sans-serif" font-size="9.3" fill="#111">3.00</text><text x="171.20" y="1013.8" text-anchor="middle" font-family="Liberation Sans, sans-serif" font-size="9.3" fill="#111">0.00</text><text x="369.55" y="1013.8" text-anchor="middle" font-family="Liberation Sans, sans-serif" font-size="9.3" fill="#111">1.00</text><text x="567.90" y="1013.8" text-anchor="middle" font-family="Liberation Sans, sans-serif" font-size="9.3" fill="#111">2.00</text><text x="766.25" y="1013.8" text-anchor="middle" font-family="Liberation Sans, sans-serif" font-size="9.3" fill="#111">3.00</text><text x="964.60" y="1013.8" text-anchor="middle" font-family="Liberation Sans, sans-serif" font-size="9.3" fill="#111">4.00</text><text x="1162.95" y="1013.8" text-anchor="middle" font-family="Liberation Sans, sans-serif" font-size="9.3" fill="#111">5.00</text><text x="1302.2" y="886.9" font-family="Liberation Sans, sans-serif" font-size="11" fill="#111">x</text></svg>
<div class="b" style="left:2px;top:161px;width:24px;height:23.5px;border:1px solid #a8a8a8;background:linear-gradient(180deg,#ededed,#cfcfcf);"></div>
<svg class="b" style="left:0;top:157px" width="40" height="40" viewBox="0 157 40 40"><path d="M10.700000000000001,169.1L6.9,165.29999999999998M10.100000000000001,165.29999999999998H6.9V168.49999999999997M17.700000000000003,169.1L21.5,165.29999999999998M18.3,165.29999999999998H21.5V168.49999999999997M10.700000000000001,176.1L6.9,179.9M10.100000000000001,179.9H6.9V176.70000000000002M17.700000000000003,176.1L21.5,179.9M18.3,179.9H21.5V176.70000000000002" fill="none" stroke="#5a5a5a" stroke-width="1.1"/></svg>
<div class="b" style="left:1440px;top:157.5px;width:6px;height:970.5px;background:#c9c9c9;"></div>
<svg class="b" style="left:1240px;top:280px" width="200" height="480" viewBox="1240 280 200 480"><path d="M1264.2,293.8V299.6H1258.4Z" fill="#3c3c3c"/><path d="M1284.0,315.8V321.6H1278.2Z" fill="#3c3c3c"/><path d="M1284.0,381.8V387.6H1278.2Z" fill="#3c3c3c"/><path d="M1284.0,425.8V431.6H1278.2Z" fill="#3c3c3c"/><path d="M1304.2,447.8V453.6H1298.4Z" fill="#3c3c3c"/><path d="M1304.2,491.8V497.6H1298.4Z" fill="#3c3c3c"/><rect x="1317.1" y="512.1" width="11" height="10.6" rx="2" fill="#e1e1e1"/><path d="M1319.5,517.6L1322.8999999999999,521.1L1330.0,511.1" fill="none" stroke="#fb8511" stroke-width="2.3" stroke-linejoin="round"/><path d="M1304.2,535.8V541.6H1298.4Z" fill="#3c3c3c"/><rect x="1317.1" y="556.1" width="11" height="10.6" rx="2" fill="#e1e1e1"/><path d="M1319.5,561.6L1322.8999999999999,565.1L1330.0,555.1" fill="none" stroke="#fb8511" stroke-width="2.3" stroke-linejoin="round"/><rect x="1317.1" y="578.1" width="11" height="10.6" rx="2" fill="#e1e1e1"/><path d="M1319.5,583.6L1322.8999999999999,587.1L1330.0,577.1" fill="none" stroke="#fb8511" stroke-width="2.3" stroke-linejoin="round"/><path d="M1284.0,601.8V607.6H1278.2Z" fill="#3c3c3c"/><path d="M1304.2,623.8V629.6H1298.4Z" fill="#3c3c3c"/><rect x="1317.1" y="644.1" width="11" height="10.6" rx="2" fill="#e1e1e1"/><path d="M1304.2,667.8V673.6H1298.4Z" fill="#3c3c3c"/><rect x="1317.1" y="688.1" width="11" height="10.6" rx="2" fill="#e1e1e1"/><path d="M1304.2,711.8V717.6H1298.4Z" fill="#3c3c3c"/><path d="M1311,726H1405.8L1420.4,736.5L1405.8,747H1311Z" fill="#f37021"/><rect x="1317" y="732.2" width="11" height="10.6" rx="2" fill="#f3dccb"/><path d="M1319.4,737.7L1322.8,741.2L1329.9,731.2" fill="none" stroke="#fb8511" stroke-width="2.3" stroke-linejoin="round"/></svg>
<span class="t" style="left:1277.04px;top:287.55px;font-size:11.70px;line-height:16px;color:#3a3a3a;font-weight:700;letter-spacing:0.247px;">DRM1</span>
<span class="t" style="left:1296.84px;top:309.55px;font-size:11.70px;line-height:16px;color:#3a3a3a;font-weight:700;letter-spacing:0.335px;">Members</span>
<span class="t" style="left:1296.20px;top:331.55px;font-size:11.70px;line-height:16px;color:#4a4a4a;letter-spacing:-0.850px;">W1</span>
<span class="t" style="left:1295.87px;top:353.55px;font-size:11.70px;line-height:16px;color:#4a4a4a;letter-spacing:-0.850px;">O1</span>
<span class="t" style="left:1296.91px;top:375.55px;font-size:11.70px;line-height:16px;color:#3a3a3a;font-weight:700;letter-spacing:0.020px;">Supports</span>
<span class="t" style="left:1295.86px;top:397.55px;font-size:11.70px;line-height:16px;color:#4a4a4a;letter-spacing:-0.850px;">LS1</span>
<span class="t" style="left:1296.84px;top:419.55px;font-size:11.70px;line-height:16px;color:#3a3a3a;font-weight:700;letter-spacing:0.028px;">Loads and Combin...</span>
<span class="t" style="left:1316.84px;top:441.55px;font-size:11.70px;line-height:16px;color:#3a3a3a;font-weight:700;letter-spacing:-0.371px;">Load cases</span>
<span class="t" style="left:1315.86px;top:463.55px;font-size:11.70px;line-height:16px;color:#4a4a4a;letter-spacing:-0.850px;">LC2</span>
<span class="t" style="left:1316.90px;top:485.55px;font-size:11.70px;line-height:16px;color:#3a3a3a;font-weight:700;letter-spacing:-0.076px;">ULS Combinations</span>
<span class="t" style="left:1338.82px;top:509.55px;font-size:11.70px;line-height:16px;color:#4a4a4a;letter-spacing:-0.850px;">C1</span>
<span class="t" style="left:1317.11px;top:529.55px;font-size:11.70px;line-height:16px;color:#3a3a3a;font-weight:700;letter-spacing:-0.167px;">SLS Combinations</span>
<span class="t" style="left:1338.82px;top:553.55px;font-size:11.70px;line-height:16px;color:#4a4a4a;letter-spacing:-0.850px;">C2</span>
<span class="t" style="left:1338.82px;top:575.55px;font-size:11.70px;line-height:16px;color:#4a4a4a;letter-spacing:-0.850px;">C3</span>
<span class="t" style="left:1297.14px;top:595.55px;font-size:11.70px;line-height:16px;color:#3a3a3a;font-weight:700;letter-spacing:-0.017px;">Reinforcements</span>
<span class="t" style="left:1316.93px;top:617.55px;font-size:11.70px;line-height:16px;color:#3a3a3a;font-weight:700;letter-spacing:-0.046px;">Group of Bars</span>
<span class="t" style="left:1338.82px;top:641.55px;font-size:11.70px;line-height:16px;color:#4a4a4a;letter-spacing:-0.850px;">GB1</span>
<span class="t" style="left:1317.40px;top:661.55px;font-size:11.70px;line-height:16px;color:#3a3a3a;font-weight:700;letter-spacing:-0.098px;">Wire Fabrics</span>
<span class="t" style="left:1339.40px;top:685.55px;font-size:11.70px;line-height:16px;color:#4a4a4a;letter-spacing:-0.850px;">WF1</span>
<span class="t" style="left:1316.93px;top:705.55px;font-size:11.70px;line-height:16px;color:#3a3a3a;font-weight:700;letter-spacing:-0.456px;">Cages</span>
<span class="t" style="left:1338.46px;top:729.95px;font-size:11.70px;line-height:16px;color:#fff;letter-spacing:-0.850px;">RO1</span>
<div class="b" style="left:1446px;top:157.8px;width:474px;height:24.8px;background:#f37021;"></div>
<span class="t" style="left:1456.23px;top:162.77px;font-size:11.91px;line-height:16px;color:#fff;font-weight:700;letter-spacing:-0.800px;">RO1</span>
<span class="t" style="left:1769.69px;top:162.60px;font-size:12.40px;line-height:16px;color:#fff;font-weight:700;letter-spacing:0.331px;">New</span>
<span class="t" style="left:1815.52px;top:162.76px;font-size:11.95px;line-height:16px;color:#fff;font-weight:700;letter-spacing:-0.800px;">Copy</span>
<span class="t" style="left:1862.89px;top:162.60px;font-size:12.40px;line-height:16px;color:#fff;font-weight:700;letter-spacing:0.236px;">Delete</span>
<span class="t" style="left:1490.34px;top:195.73px;font-size:13.20px;line-height:17px;color:#f37021;font-weight:700;letter-spacing:0.523px;">Reinforcement around opening or patch load/support</span>
<span class="t" style="left:1490.34px;top:441.43px;font-size:13.20px;line-height:17px;color:#f37021;font-weight:700;letter-spacing:0.521px;">Diagonal reinforcement</span>
<div class="b" style="left:1650px;top:219.2px;width:237px;height:21.6px;background:#f0f0f0;"></div>
<div class="b" style="left:1887px;top:219.2px;width:21.8px;height:21.6px;background:#9b9b9b;"></div>
<span class="t" style="left:1654.88px;top:221.50px;font-size:13.00px;line-height:17px;color:#111;">8</span>
<span class="t" style="left:1490.19px;top:221.50px;font-size:13.00px;line-height:17px;color:#111;letter-spacing:-0.348px;">Φ - Diameter [mm]</span>
<div class="b" style="left:1648px;top:243.2px;width:260.8px;height:21.6px;background:#f0f0f0;"></div>
<span class="t" style="left:1652.95px;top:245.50px;font-size:13.00px;line-height:17px;color:#111;">2</span>
<span class="t" style="left:1490.06px;top:245.50px;font-size:13.00px;line-height:17px;color:#111;letter-spacing:-0.472px;">n - Number of bars in layer</span>
<div class="b" style="left:1648px;top:267.2px;width:260.8px;height:21.6px;background:#f0f0f0;"></div>
<span class="t" style="left:1653.08px;top:269.50px;font-size:13.00px;line-height:17px;color:#111;">50</span>
<span class="t" style="left:1489.86px;top:269.50px;font-size:13.00px;line-height:17px;color:#111;letter-spacing:-0.448px;">Distances [mm]</span>
<div class="b" style="left:1648px;top:291.2px;width:260.8px;height:21.6px;background:#f0f0f0;"></div>
<span class="t" style="left:1652.95px;top:293.50px;font-size:13.00px;line-height:17px;color:#111;">2</span>
<span class="t" style="left:1489.86px;top:293.50px;font-size:13.00px;line-height:17px;color:#111;letter-spacing:-0.540px;">Number of layers</span>
<div class="b" style="left:1648px;top:315.2px;width:260.8px;height:21.6px;background:#f0f0f0;"></div>
<span class="t" style="left:1653.14px;top:317.50px;font-size:13.00px;line-height:17px;color:#111;">300</span>
<span class="t" style="left:1490.90px;top:317.50px;font-size:13.00px;line-height:17px;color:#111;letter-spacing:-0.268px;">Anchoring length [mm]</span>
<span class="t" style="left:1490.06px;top:342.30px;font-size:13.00px;line-height:17px;color:#111;">Material</span>
<div class="b" style="left:1649px;top:339.2px;width:234.8px;height:21.7px;background:#e4e4e4;"></div>
<div class="b" style="left:1887px;top:339.2px;width:21.9px;height:21.7px;background:#9a9a9a;"></div>
<span class="t" style="left:1654.9px;top:344.2px;font-size:12.2px;line-height:12px;color:#111;text-shadow:0.3px 0 0 #111;transform:scaleX(0.86);transform-origin:0 0;">B 500B</span>
<span class="t" style="left:1490.06px;top:366.30px;font-size:13.00px;line-height:17px;color:#111;letter-spacing:-0.698px;">Bar anchorage type</span>
<span class="t" style="left:1490.26px;top:390.30px;font-size:13.00px;line-height:17px;color:#111;letter-spacing:-0.545px;">M - Master</span>
<div class="b" style="left:1649px;top:387.2px;width:260px;height:21.6px;background:#e4e4e4;"></div>
<span class="t" style="left:1655.29px;top:390.15px;font-size:11.41px;line-height:15px;color:#111;letter-spacing:-0.800px;">O1</span>
<span class="t" style="left:1490.25px;top:414.30px;font-size:13.00px;line-height:17px;color:#111;letter-spacing:-0.666px;">Concrete cover type</span>
<div class="b" style="left:1649px;top:411.2px;width:260px;height:21.6px;background:#e4e4e4;"></div>
<span class="t" style="left:1654.66px;top:413.65px;font-size:11.70px;line-height:16px;color:#111;letter-spacing:0.076px;">From Settings</span>
<span class="t" style="left:1490.90px;top:467.20px;font-size:13.00px;line-height:17px;color:#111;letter-spacing:-0.480px;">Add diagonal reinforcement</span>
<div class="b" style="left:1650px;top:488.3px;width:237px;height:21.6px;background:#f0f0f0;"></div>
<div class="b" style="left:1887px;top:488.3px;width:21.8px;height:21.6px;background:#9b9b9b;"></div>
<span class="t" style="left:1654.88px;top:490.60px;font-size:13.00px;line-height:17px;color:#111;">8</span>
<span class="t" style="left:1490.19px;top:490.60px;font-size:13.00px;line-height:17px;color:#111;letter-spacing:-0.348px;">Φ - Diameter [mm]</span>
<div class="b" style="left:1648px;top:512.4px;width:260.8px;height:21.6px;background:#f0f0f0;"></div>
<span class="t" style="left:1653.08px;top:514.70px;font-size:13.00px;line-height:17px;color:#111;">50</span>
<span class="t" style="left:1489.86px;top:514.70px;font-size:13.00px;line-height:17px;color:#111;letter-spacing:-0.448px;">Distances [mm]</span>
<div class="b" style="left:1648px;top:536.4px;width:260.8px;height:21.6px;background:#f0f0f0;"></div>
<span class="t" style="left:1652.95px;top:538.70px;font-size:13.00px;line-height:17px;color:#111;">2</span>
<span class="t" style="left:1489.86px;top:538.70px;font-size:13.00px;line-height:17px;color:#111;letter-spacing:-0.540px;">Number of layers</span>
<div class="b" style="left:1480px;top:560.2px;width:163.8px;height:21.7px;background:#f37021;"></div>
<div class="b" style="left:1648px;top:560.2px;width:260.8px;height:21.6px;background:#f0f0f0;"></div>
<div class="b" style="left:1653px;top:563.8px;width:21.2px;height:14.4px;background:#99c9ef;"></div>
<span class="t" style="left:1652.95px;top:562.50px;font-size:13.00px;line-height:17px;color:#14324a;letter-spacing:-0.170px;">600</span>
<span class="t" style="left:1489.86px;top:562.50px;font-size:13.00px;line-height:17px;color:#fff;letter-spacing:-0.383px;">Length of bars [mm]</span>
<span class="t" style="left:1490.06px;top:587.30px;font-size:13.00px;line-height:17px;color:#111;letter-spacing:-0.698px;">Bar anchorage type</span>
<div class="b" style="left:1451px;top:920.6px;width:465px;height:1.2px;background:#d2d2d2;"></div>
<svg class="b" style="left:1446px;top:157px" width="474" height="971" viewBox="1446 157 474 971"><path d="M1463,200.2H1473L1468,207.6Z" fill="#f37021"/><path d="M1463,445.2H1473L1468,452.6Z" fill="#f37021"/><path d="M1895.1,227.5H1901.1L1898.1,223.39999999999998ZM1895.1,233.79999999999998H1901.1L1898.1,237.89999999999998Z" fill="#fff"/><path d="M1871.8,347.0H1879.2L1875.5,351.79999999999995Z" fill="#111"/><path d="M1893.2,348.8A5,5 0 0 1 1902.2,346.2" fill="none" stroke="#3ed06f" stroke-width="2"/><path d="M1904.2,343.6V348.8H1899Z" fill="#3ed06f"/><path d="M1903,351.4A5,5 0 0 1 1894,354" fill="none" stroke="#3ed06f" stroke-width="2"/><path d="M1892,356.6V351.4H1897.2Z" fill="#3ed06f"/><rect x="1648" y="363.2" width="22.2" height="21.8" fill="#f37021"/><rect x="1669.9" y="363.7" width="22" height="20.8" fill="#fff" stroke="#a6a6a6" stroke-width="1.1"/><rect x="1691.9" y="363.7" width="22" height="20.8" fill="#fff" stroke="#a6a6a6" stroke-width="1.1"/><rect x="1713.9" y="363.7" width="22" height="20.8" fill="#fff" stroke="#a6a6a6" stroke-width="1.1"/><rect x="1735.9" y="363.7" width="22" height="20.8" fill="#fff" stroke="#a6a6a6" stroke-width="1.1"/><rect x="1757.9" y="363.7" width="22" height="20.8" fill="#fff" stroke="#a6a6a6" stroke-width="1.1"/><rect x="1779.9" y="363.7" width="22" height="20.8" fill="#fff" stroke="#a6a6a6" stroke-width="1.1"/><path d="M1650.2,378.4H1667.7" fill="none" stroke="#0a0a0a" stroke-width="2.2" /><path d="M1672.8,372.2Q1673,378.4 1679,378.4H1689.9" fill="none" stroke="#0a0a0a" stroke-width="2.0" /><path d="M1702,370.4L1695.6,376.2Q1694.6,378.4 1698.5,378.4H1711.8" fill="none" stroke="#0a0a0a" stroke-width="2.0" /><path d="M1734.1,371.59999999999997H1721.2A3.4,3.4 0 0 0 1721.2,378.4H1734.1" fill="none" stroke="#0a0a0a" stroke-width="2.0" /><path d="M1738,378.4H1756" fill="none" stroke="#0a0a0a" stroke-width="2.0" /><circle cx="1749.1" cy="374.5" r="2" fill="#0a0a0a"/><rect x="1748.4" y="375.4" width="1.5" height="3" fill="#0a0a0a"/><path d="M1761,371.79999999999995H1769Q1773,370.9 1774.4,366.4H1776.6V380.2H1774.4Q1773,375.7 1769,374.79999999999995H1761Z" fill="#0a0a0a"/><path d="M1782.2,373.7H1792.4" fill="none" stroke="#0a0a0a" stroke-width="1.9" /><rect x="1792.4" y="368.59999999999997" width="7.4" height="10.2" fill="#c8c8c8" stroke="#0a0a0a" stroke-width="1.3"/><path d="M1896.8999999999999,395.0H1904.3L1900.6,399.79999999999995Z" fill="#111"/><path d="M1896.8999999999999,419.0H1904.3L1900.6,423.79999999999995Z" fill="#111"/><rect x="1654.3" y="469.3" width="10.8" height="10.8" rx="2" fill="#e1e1e1"/><path d="M1656.8,474.9L1660.2,478.4L1667.3,468.4" fill="none" stroke="#fb8511" stroke-width="2.3" stroke-linejoin="round"/><path d="M1895.1,496.6H1901.1L1898.1,492.5ZM1895.1,502.90000000000003H1901.1L1898.1,507.0Z" fill="#fff"/><rect x="1648" y="584.3" width="22.2" height="21.8" fill="#f37021"/><rect x="1669.9" y="584.8" width="22" height="20.8" fill="#fff" stroke="#a6a6a6" stroke-width="1.1"/><rect x="1691.9" y="584.8" width="22" height="20.8" fill="#fff" stroke="#a6a6a6" stroke-width="1.1"/><rect x="1713.9" y="584.8" width="22" height="20.8" fill="#fff" stroke="#a6a6a6" stroke-width="1.1"/><rect x="1735.9" y="584.8" width="22" height="20.8" fill="#fff" stroke="#a6a6a6" stroke-width="1.1"/><rect x="1757.9" y="584.8" width="22" height="20.8" fill="#fff" stroke="#a6a6a6" stroke-width="1.1"/><rect x="1779.9" y="584.8" width="22" height="20.8" fill="#fff" stroke="#a6a6a6" stroke-width="1.1"/><path d="M1650.2,599.5H1667.7" fill="none" stroke="#0a0a0a" stroke-width="2.2" /><path d="M1672.8,593.3Q1673,599.5 1679,599.5H1689.9" fill="none" stroke="#0a0a0a" stroke-width="2.0" /><path d="M1702,591.5L1695.6,597.3Q1694.6,599.5 1698.5,599.5H1711.8" fill="none" stroke="#0a0a0a" stroke-width="2.0" /><path d="M1734.1,592.7H1721.2A3.4,3.4 0 0 0 1721.2,599.5H1734.1" fill="none" stroke="#0a0a0a" stroke-width="2.0" /><path d="M1738,599.5H1756" fill="none" stroke="#0a0a0a" stroke-width="2.0" /><circle cx="1749.1" cy="595.6" r="2" fill="#0a0a0a"/><rect x="1748.4" y="596.5" width="1.5" height="3" fill="#0a0a0a"/><path d="M1761,592.9H1769Q1773,592.0 1774.4,587.5H1776.6V601.3H1774.4Q1773,596.8 1769,595.9H1761Z" fill="#0a0a0a"/><path d="M1782.2,594.8H1792.4" fill="none" stroke="#0a0a0a" stroke-width="1.9" /><rect x="1792.4" y="589.7" width="7.4" height="10.2" fill="#c8c8c8" stroke="#0a0a0a" stroke-width="1.3"/><path d="M1603.75,992.5H1715L1625,1005.8L1604.4,1068.4Z" fill="#000"/><rect x="1603.9" y="992.6" width="111" height="76" fill="none" stroke="#000" stroke-width="0.9"/><path d="M1590.8,1078.8H1731.4M1590.8,1088H1731.4M1590.8,1097.5H1731.4" stroke="#f8996a" stroke-width="2.3" fill="none"/><path d="M1700,945L1770.6,1009.2M1693,950.8L1763.8,1015M1686,958L1756.8,1022.2" stroke="#f8996a" stroke-width="2.3" fill="none"/><path d="M1711.2,932L1781.4,996.4M1704.6,939L1715.2,929.4M1774.4,1003.6L1785,994M1709.6,930.6L1712.8,933.4M1779.6,995L1783,997.8" stroke="#8c8c8c" stroke-width="0.7" fill="none"/><path d="M1758.4,1026.8L1768.4,1036.2M1767.4,1017.6L1776,1025.6M1759.4,1033.2L1775.2,1019M1764,1033.4L1768,1029.4M1770.6,1023.6L1774,1027" stroke="#8c8c8c" stroke-width="0.7" fill="none"/><path d="M1667,984.2H1686.3L1696.3,968" stroke="#8c8c8c" stroke-width="0.7" fill="none"/><path d="M1748.2,1061.3H1728.8L1718.8,1078" stroke="#8c8c8c" stroke-width="0.7" fill="none"/><path d="M1564.2,1057.5H1603.8M1590.4,1055V1066.4M1588.6,1055.2L1592.4,1059.6M1601.6,1059.8L1605.6,1055.4" stroke="#8c8c8c" stroke-width="0.7" fill="none"/><path d="M1572.6,1079H1582M1572.6,1087.6H1582M1572.8,1077V1090M1569.6,1076.4L1575.6,1081.4M1570,1085.4L1576,1090.4" stroke="#8c8c8c" stroke-width="0.7" fill="none"/><text x="1750" y="959.3000000000001" font-family="Liberation Sans, sans-serif" fill="#1a1a1a" font-size="12.2">L<tspan font-size="8.1" dy="2.4">DB</tspan></text><text x="1668" y="978.9000000000001" font-family="Liberation Sans, sans-serif" fill="#1a1a1a" font-size="12.5">ϕ<tspan font-size="8.1" dy="2.4">DO</tspan></text><text x="1771.3" y="1041.9" font-family="Liberation Sans, sans-serif" fill="#1a1a1a" font-size="12.2">D<tspan font-size="8.1" dy="2.4">DO</tspan></text><text x="1732.4" y="1055.3" font-family="Liberation Sans, sans-serif" fill="#1a1a1a" font-size="12.5">ϕ<tspan font-size="8.1" dy="2.4">O</tspan></text><text x="1568" y="1055.5" font-family="Liberation Sans, sans-serif" fill="#1a1a1a" font-size="12.2">LA<tspan font-size="8.1" dy="2.4">O</tspan></text><text x="1550.6" y="1088.7" font-family="Liberation Sans, sans-serif" fill="#1a1a1a" font-size="12.2">D<tspan font-size="8.1" dy="2.4">O</tspan></text></svg>
</body></html>
